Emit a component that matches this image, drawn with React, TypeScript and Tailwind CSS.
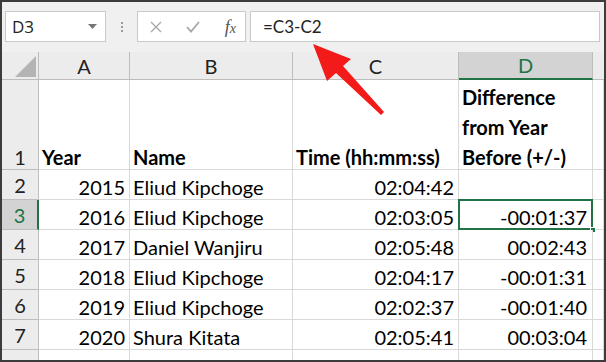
import React from "react";

const font = { fontFamily: "Lato, 'Open Sans', sans-serif" };

type Row = { n: string; a: string; b: string; c: string; d: string };

const rows: Row[] = [
  { n: "2", a: "2015", b: "Eliud Kipchoge", c: "02:04:42", d: "" },
  { n: "3", a: "2016", b: "Eliud Kipchoge", c: "02:03:05", d: "-00:01:37" },
  { n: "4", a: "2017", b: "Daniel Wanjiru", c: "02:05:48", d: "00:02:43" },
  { n: "5", a: "2018", b: "Eliud Kipchoge", c: "02:04:17", d: "-00:01:31" },
  { n: "6", a: "2019", b: "Eliud Kipchoge", c: "02:02:37", d: "-00:01:40" },
  { n: "7", a: "2020", b: "Shura Kitata", c: "02:05:41", d: "00:03:04" },
];

const cell = "border-r border-b border-[#d9d9d9] bg-white text-[20px] text-black leading-[24px] flex items-end overflow-hidden whitespace-nowrap";
const rowHead = "border-r border-b border-[#bdbdbd] bg-[#ececec] text-[20px] text-[#222] flex items-center justify-center";
const colHead = "border-r border-b border-[#bdbdbd] bg-[#ececec] text-[20px] text-[#222] flex items-center justify-center";

function Toolbar() {
  return (
    <div className="h-[50px] bg-[#f0f0f0] flex items-start pt-[9px] pl-[3px]">
      <div className="w-[101px] h-[31px] bg-white border border-[#c9c9c9] flex items-center pl-[6px] pr-[8px] justify-between">
        <span className="text-[17px] text-[#222]" style={{ fontFamily: "'Open Sans', sans-serif" }}>D3</span>
        <svg width="9" height="6" viewBox="0 0 9 6"><path d="M0 0h9L4.5 5z" fill="#777" /></svg>
      </div>
      <div className="w-[31px] h-[31px] flex flex-col items-center justify-center gap-[2px]">
        <span className="w-[2px] h-[2px] bg-[#9a9a9a]" />
        <span className="w-[2px] h-[2px] bg-[#9a9a9a]" />
        <span className="w-[2px] h-[2px] bg-[#9a9a9a]" />
      </div>
      <div className="w-[109px] h-[31px] bg-white border border-[#c9c9c9] flex items-center pl-[12px] pr-[9px] justify-between">
        <svg width="12" height="12" viewBox="0 0 12 12"><path d="M1 1l10 10M11 1L1 11" stroke="#a8a8a8" strokeWidth="1.4" /></svg>
        <svg width="14" height="12" viewBox="0 0 14 12"><path d="M1 6l4 4.5L13 1" stroke="#a8a8a8" strokeWidth="1.8" fill="none" /></svg>
        <span className="italic text-[18px] leading-none text-[#555]" style={{ fontFamily: "'Liberation Serif', serif" }}>
          f<span className="text-[14px]">x</span>
        </span>
      </div>
      <div className="ml-[4px] w-[350px] h-[31px] bg-white border border-[#c9c9c9] flex items-center pl-[12px]">
        <span className="text-[17px] text-[#222]" style={font}>=C3-C2</span>
      </div>
    </div>
  );
}

export default function App() {
  return (
    <div className="relative w-[606px] h-[362px] overflow-hidden border-2 border-[#3c3c3c] bg-[#f0f0f0]" style={font}>
      <Toolbar />
      <div
        className="grid"
        style={{
          gridTemplateColumns: "37px 91px 163px 166px 134px 11px",
          gridTemplateRows: "28px 90px 30px 30px 30px 30px 30px 30px 30px",
        }}
      >
        {/* header row */}
        <div className="border-r border-b border-[#bdbdbd] bg-[#ececec] relative">
          <svg className="absolute right-[2px] bottom-[2px]" width="21" height="21" viewBox="0 0 21 21"><path d="M21 0v21H0z" fill="#b4b4b4" /></svg>
        </div>
        <div className={colHead}>A</div>
        <div className={colHead}>B</div>
        <div className={colHead}>C</div>
        <div className="border-r border-[#bdbdbd] border-b-2 border-b-[#217346] bg-[#d3d3d3] text-[20px] text-[#217346] flex items-center justify-center">D</div>
        <div className="border-b border-[#bdbdbd] bg-[#ececec]" />

        {/* row 1: tall header row with wrapped text */}
        <div className={rowHead + " !items-end"}><span className="leading-[24px]">1</span></div>
        <div className={cell + " font-bold pl-[3px]"}>Year</div>
        <div className={cell + " font-bold pl-[3px]"}>Name</div>
        <div className={cell + " font-bold pl-[3px]"}>Time (hh:mm:ss)</div>
        <div className={cell + " font-bold pl-[3px] !whitespace-normal"}>
          <div className="leading-[30px] translate-y-[3px]">Difference<br />from Year<br />Before (+/-)</div>
        </div>
        <div className={cell} />

        {rows.map((r) => {
          const sel = r.n === "3";
          return (
            <React.Fragment key={r.n}>
              <div
                className={
                  sel
                    ? "border-r-2 border-r-[#217346] border-b border-[#bdbdbd] bg-[#d3d3d3] text-[20px] text-[#217346] flex items-center justify-center"
                    : rowHead
                }
              >
                {r.n}
              </div>
              <div className={cell + " justify-end pr-[4px]"}>{r.a}</div>
              <div className={cell + " pl-[3px]"}>{r.b}</div>
              <div className={cell + " justify-end pr-[4px]"}>{r.c}</div>
              <div className={cell + " justify-end pr-[5px] relative !overflow-visible"}>
                {r.d}
                {sel && (
                  <>
                    <div className="absolute -left-[1px] -top-[1px] right-[-1px] bottom-[-1px] border-2 border-[#217346] pointer-events-none" />
                    <div className="absolute right-[-4px] bottom-[-4px] w-[6px] h-[6px] bg-[#217346] border border-white" />
                  </>
                )}
              </div>
              <div className={cell} />
            </React.Fragment>
          );
        })}

        {/* row 8, cut off by the window edge */}
        <div className={rowHead} />
        <div className={cell} />
        <div className={cell} />
        <div className={cell} />
        <div className={cell} />
        <div className={cell} />
      </div>

      {/* red callout arrow pointing at the formula */}
      <svg className="absolute left-0 top-0 pointer-events-none" width="606" height="362" viewBox="0 0 606 362">
        <path
          d="M311 42 L349 57 L341 64 L382 110 L379 113 L334 71 L325 79 Z"
          fill="#f31a1a"
        />
      </svg>
    </div>
  );
}
